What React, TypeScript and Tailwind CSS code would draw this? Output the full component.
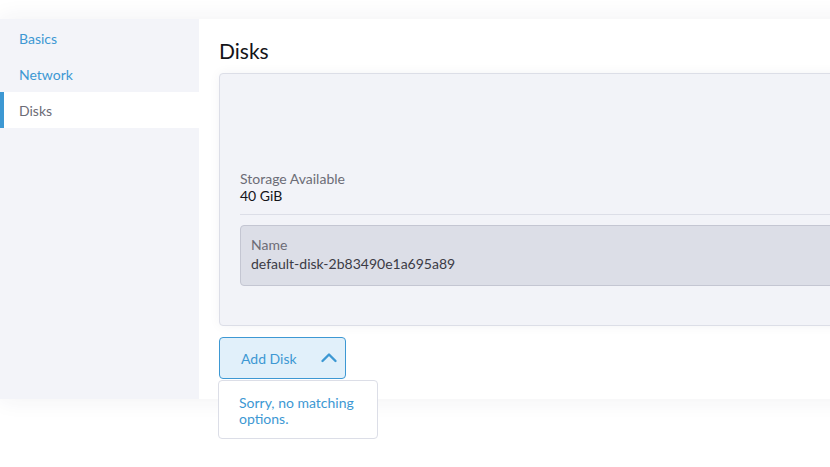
import React from "react";

export default function App() {
  return (
    <div className="relative h-[467px] w-[830px] overflow-hidden bg-white pt-[19px] font-['Lato',sans-serif]">
      <div className="flex h-[380px] w-[900px] bg-white shadow-[0_0_22px_rgba(40,40,80,0.07)]">
        <aside className="flex w-[199px] shrink-0 flex-col bg-[#f3f4f9] pt-px">
          <div className="flex h-9 items-center pl-[19px] text-[14px] text-[#3d98d3]">Basics</div>
          <div className="flex h-9 items-center pl-[19px] text-[14px] text-[#3d98d3]">Network</div>
          <div className="flex h-9 items-center border-l-4 border-[#3d98d3] bg-white pl-[15px] text-[14px] text-[#6c6c76]">Disks</div>
        </aside>
        <main className="flex-1 pl-5 pt-[18px]">
          <h1 className="mb-2 h-7 text-[21px] leading-7 text-[#141419]">Disks</h1>
          <div className="rounded-[4px] border border-[#dcdee7] bg-[#f2f3f8] px-5 pb-[39px] pt-[96px] shadow-[0_0_12px_rgba(40,40,80,0.05)]">
            <div className="text-[14px] leading-[17px] text-[#6c6c76]">Storage Available</div>
            <div className="text-[14px] leading-[17px] text-[#141419]">40 GiB</div>
            <div className="mb-[10px] mt-[10px] h-px bg-[#dcdee7]" />
            <div className="h-[61px] rounded-[4px] border border-[#c4c6d2] bg-[#dcdee7] px-[10px] pt-[10px]">
              <div className="text-[14px] leading-[18px] text-[#6c6c76]">Name</div>
              <div className="text-[14px] leading-[20px] text-[#3b3b45]">default-disk-2b83490e1a695a89</div>
            </div>
          </div>
          <div className="relative mt-[11px] w-[127px]">
            <button className="flex h-[42px] w-[127px] items-center justify-between rounded-[4px] border border-[#3d98d3] bg-[#e1f0fa] pl-[21px] pr-[7px] text-[14px] text-[#3d98d3]">
              <span>Add Disk</span>
              <svg width="18" height="18" viewBox="0 0 18 18" fill="none" stroke="#3d98d3" strokeWidth="2.4" strokeLinecap="round" strokeLinejoin="round">
                <path d="M2.5 12 L9 5.5 L15.5 12" />
              </svg>
            </button>
            <div className="absolute left-[-1px] top-[43px] w-[160px] rounded-[4px] border border-[#dcdee7] bg-white px-5 pb-[11px] pt-[14px] text-[14px] leading-4 text-[#3d98d3]">
              Sorry, no matching options.
            </div>
          </div>
        </main>
      </div>
    </div>
  );
}
